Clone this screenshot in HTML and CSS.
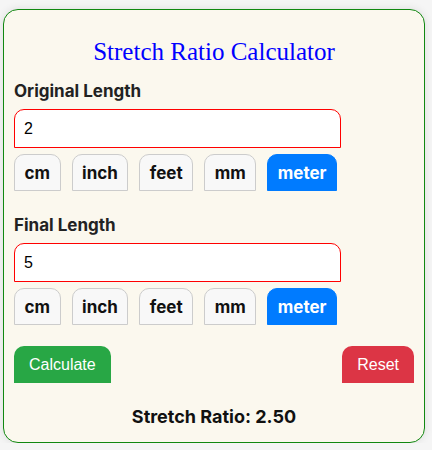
FILE: index.html
```html
<!DOCTYPE html>
<html>
<head>
<meta charset="utf-8">
<link rel="stylesheet" href="styles.css">
</head>
<body>
<div class="calc">
  <h2 class="title">Stretch Ratio Calculator</h2>
  <div class="group">
    <label class="label">Original Length</label>
    <input class="field" type="text" value="2">
    <div class="units">
      <button class="unit">cm</button>
      <button class="unit">inch</button>
      <button class="unit">feet</button>
      <button class="unit">mm</button>
      <button class="unit active">meter</button>
    </div>
  </div>
  <div class="group">
    <label class="label">Final Length</label>
    <input class="field" type="text" value="5">
    <div class="units">
      <button class="unit">cm</button>
      <button class="unit">inch</button>
      <button class="unit">feet</button>
      <button class="unit">mm</button>
      <button class="unit active">meter</button>
    </div>
  </div>
  <div class="actions">
    <button class="btn calc-btn">Calculate</button>
    <button class="btn reset-btn">Reset</button>
  </div>
  <div class="result">Stretch Ratio: 2.50</div>
</div>
</body>
</html>
```
FILE: styles.css
```css
html, body {
  margin: 0;
  padding: 0;
  background: #f5f5f5;
}
body {
  padding: 9px 0 0 3px;
}
.calc {
  width: 400px;
  padding: 10px 10px 15px 10px;
  background: #fbf8ee;
  border: 1px solid #118811;
  border-radius: 15px;
  box-shadow: 0 0 8px rgba(0,0,0,0.1);
  font-family: Inter, "Liberation Sans", sans-serif;
}
.title {
  margin: 18px 0 15px;
  text-align: center;
  font-family: "Liberation Serif", serif;
  font-weight: normal;
  font-size: 25px;
  color: #0000ff;
}
.group + .group {
  margin-top: 24px;
}
.label {
  display: block;
  font-weight: 700;
  font-size: 17px;
  line-height: 21px;
  color: #222;
  margin-bottom: 7px;
}
.field {
  display: block;
  box-sizing: border-box;
  width: 327px;
  height: 39px;
  padding: 0 9px;
  border: 1px solid #ff0000;
  border-radius: 10px 10px 0 0;
  background: #fff;
  font-family: "Liberation Sans", sans-serif;
  font-size: 16px;
  color: #000;
  outline: none;
}
.units {
  display: flex;
  gap: 11px;
  margin-top: 6px;
}
.unit {
  height: 37px;
  padding: 0 9.5px;
  border: 1px solid #cccccc;
  border-radius: 10px 10px 0 0;
  background: #f8f8f8;
  font-family: Inter, "Liberation Sans", sans-serif;
  font-weight: 700;
  font-size: 17px;
  color: #111;
}
.unit.active {
  background: #007bff;
  border-color: #007bff;
  color: #fff;
}
.actions {
  display: flex;
  justify-content: space-between;
  margin-top: 21px;
}
.btn {
  height: 37px;
  padding: 0 15px;
  border: none;
  border-radius: 10px 10px 0 0;
  font-family: "Liberation Sans", sans-serif;
  font-size: 16px;
  color: #fff;
}
.calc-btn { background: #28a745; }
.reset-btn { background: #dc3545; }
.result {
  margin-top: 23px;
  text-align: center;
  font-weight: 700;
  font-size: 18px;
  color: #111;
}
```
